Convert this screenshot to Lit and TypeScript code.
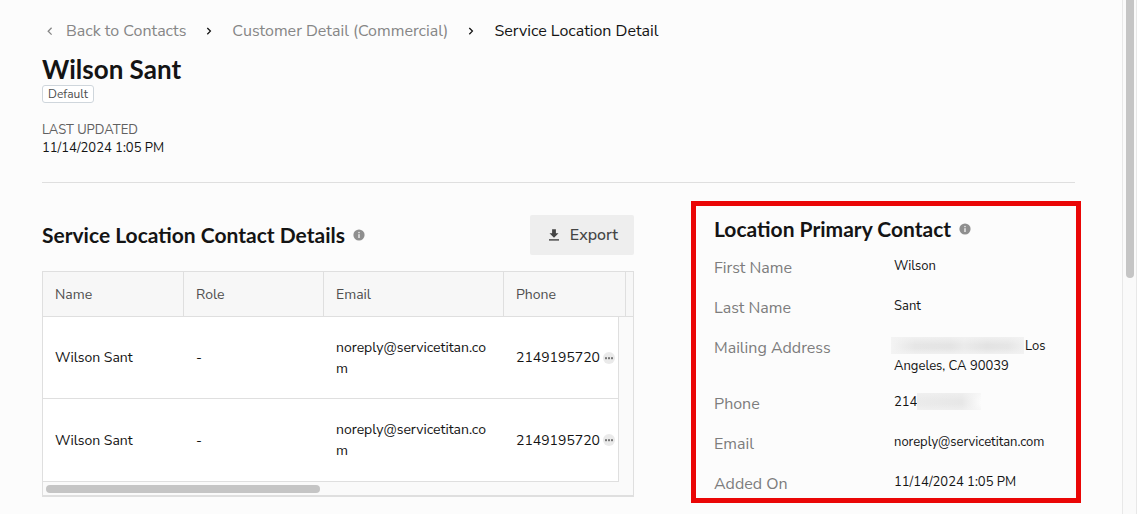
import { LitElement, html, svg, css } from "lit";
import { customElement } from "lit/decorators.js";

interface Contact {
  name: string;
  role: string;
  email: string;
  phone: string;
}

const contacts: Contact[] = [
  { name: "Wilson Sant", role: "-", email: "noreply@servicetitan.com", phone: "2149195720" },
  { name: "Wilson Sant", role: "-", email: "noreply@servicetitan.com", phone: "2149195720" },
];

const chevronRight = html`<svg class="chevron" viewBox="0 0 16 16" aria-hidden="true">
  ${svg`<path d="M6.3 5 L9.4 8.1 L6.3 11.2" />`}
</svg>`;

const infoIcon = html`<svg class="info" viewBox="0 0 12 12" role="img" aria-label="More information">
  ${svg`<circle cx="6" cy="6" r="5.6" fill="#8f8f8f" />
  <rect x="5.4" y="5.2" width="1.2" height="3.8" fill="#fff" />
  <rect x="5.4" y="2.9" width="1.2" height="1.3" fill="#fff" />`}
</svg>`;

@customElement("app-root")
export class AppRoot extends LitElement {
  static styles = css`
    :host {
      display: flex;
      min-height: 100vh;
      background: #fcfcfc;
      color: #141414;
      font-family: "Nunito Sans", Roboto, sans-serif;
      font-size: 14px;
    }
    * {
      box-sizing: border-box;
    }
    .main {
      flex: 1;
      min-width: 0;
      padding: 19px 47px 11px 42px;
    }
    .crumbs {
      display: flex;
      align-items: center;
      gap: 15px;
      font-size: 16px;
      line-height: 24px;
    }
    .crumbs a {
      display: flex;
      align-items: center;
      gap: 8px;
      color: #868686;
      text-decoration: none;
    }
    .chevron {
      width: 16px;
      height: 16px;
      fill: none;
      stroke: currentColor;
      stroke-width: 1.3;
    }
    h1,
    h2 {
      margin: 0;
      font-family: "Sofia Pro", Lato, sans-serif;
      font-weight: 700;
    }
    h1 {
      margin-top: 10px;
      font-size: 26px;
      line-height: 32px;
    }
    h2 {
      display: flex;
      align-items: center;
      gap: 8px;
      font-size: 21px;
      line-height: 24px;
      white-space: nowrap;
    }
    .info {
      width: 12px;
      height: 12px;
    }
    .tag {
      display: block;
      width: fit-content;
      padding: 0 5px;
      border: 1px solid #cfd6dc;
      border-radius: 3px;
      background: #fff;
      color: #4f4f4f;
      font-size: 12px;
      line-height: 16px;
    }
    .updated {
      margin: 18px 0 25px;
      font-size: 13px;
      line-height: 18px;
    }
    .updated dt {
      color: #606060;
    }
    dd {
      margin: 0;
    }
    .rule {
      margin: 0;
      border: 0;
      border-top: 1px solid #dfdfdf;
    }
    .columns {
      display: grid;
      grid-template-columns: minmax(0, 592fr) minmax(0, 390fr);
      align-items: start;
      column-gap: 57px;
      margin-right: -6px;
    }
    .details {
      padding-top: 32px;
    }
    .bar {
      display: flex;
      align-items: center;
      justify-content: space-between;
      margin-bottom: 16px;
    }
    .export {
      display: flex;
      align-items: center;
      gap: 8px;
      height: 40px;
      padding: 0 16px;
      border: 0;
      border-radius: 2px;
      background: #eee;
      color: #444;
      font: 500 16px/24px "Nunito Sans", Roboto, sans-serif;
    }
    .export svg {
      width: 16px;
      height: 16px;
      fill: #444;
    }
    .grid {
      border: 1px solid #dfdfdf;
      border-bottom-width: 2px;
      background: #fafafa;
    }
    table {
      width: 100%;
      table-layout: fixed;
      border-collapse: separate;
      border-spacing: 0;
    }
    .c-name {
      width: 141px;
    }
    .c-role {
      width: 140px;
    }
    .c-phone {
      width: 115px;
    }
    .c-edge {
      width: 7px;
    }
    th {
      height: 45px;
      padding: 0 12px;
      border-right: 1px solid #dfdfdf;
      border-bottom: 1px solid #dfdfdf;
      background: #f7f7f7;
      color: #4f4f4f;
      font-weight: 400;
      text-align: left;
    }
    th.last {
      padding: 0;
      border-right: 0;
    }
    td {
      height: 82px;
      padding: 0 12px;
      border-bottom: 1px solid #dfdfdf;
      background: #fff;
      line-height: 21px;
      overflow-wrap: anywhere;
    }
    tr:last-child td {
      height: 83px;
    }
    td.phone {
      padding-right: 3px;
      border-right: 1px solid #dfdfdf;
    }
    td.track {
      padding: 0;
      border: 0;
      background: #fafafa;
    }
    .call {
      display: flex;
      align-items: center;
      justify-content: space-between;
    }
    .more {
      width: 12px;
      height: 12px;
      padding: 0;
      border: 0;
      border-radius: 50%;
      background: #eaeaea;
      line-height: 0;
    }
    .more svg {
      width: 12px;
      height: 12px;
      fill: #777;
    }
    .hscroll {
      padding: 3px 3px 2px;
    }
    .hthumb {
      width: 47%;
      height: 8px;
      border-radius: 4px;
      background: #c5c5c5;
    }
    .primary {
      margin-top: 18px;
      padding: 11px 18px 2px;
      border: 5px solid #ea0606;
    }
    .facts {
      margin: 15px 0 0;
    }
    .fact {
      display: grid;
      grid-template-columns: 180px 1fr;
      align-items: start;
      padding-bottom: 16px;
    }
    .fact:last-child {
      padding-bottom: 0;
    }
    .fact dt {
      color: #7d7d7d;
      font-size: 16px;
      line-height: 24px;
    }
    .fact dd {
      font-size: 13px;
      line-height: 20px;
    }
    .redacted {
      display: inline-block;
      height: 17px;
      vertical-align: middle;
    }
    .street {
      width: 133px;
      margin: -3px 1px -1px -3px;
      background: linear-gradient(#f3f3f3cc, transparent 45%, transparent 65%, #f3f3f3cc),
        linear-gradient(90deg, #f4f4f4, #e6e6e6 18%, #e4e4e4 45%, #ebebeb 55%, #e3e3e3 72%, #e6e6e6 88%, #f0f0f0);
    }
    .digits {
      width: 64px;
      margin: -3px 0 -1px;
      background: linear-gradient(#f3f3f399, transparent 45%, transparent 65%, #f3f3f399),
        linear-gradient(90deg, #ebebeb, #e7e7e7 70%, #fcfcfc);
    }
    .rail {
      flex: none;
      width: 15px;
      padding: 0 2px 0 3px;
      border: solid #e8e8e8;
      border-width: 0 1px;
      background: #fafafa;
    }
    .thumb {
      width: 8px;
      height: 54vh;
      border-radius: 0 0 4px 4px;
      background: #c5c5c5;
    }
  `;

  private row(contact: Contact, index: number) {
    return html`<tr>
      <td>${contact.name}</td>
      <td>${contact.role}</td>
      <td>${contact.email}</td>
      <td class="phone">
        <div class="call">
          ${contact.phone}
          <button class="more" aria-label="More phone numbers">
            <svg viewBox="0 0 12 12" aria-hidden="true">
              ${svg`<rect x="2" y="5.2" width="2" height="2" /><rect x="5" y="5.2" width="2" height="2" /><rect x="8" y="5.2" width="2" height="2" />`}
            </svg>
          </button>
        </div>
      </td>
      ${index === 0 ? html`<td class="track" colspan="2" rowspan=${contacts.length}></td>` : null}
    </tr>`;
  }

  private fact(label: string, value: unknown) {
    return html`<div class="fact"><dt>${label}</dt><dd>${value}</dd></div>`;
  }

  render() {
    return html`
      <main class="main">
        <nav class="crumbs" aria-label="Breadcrumb">
          <a href="#contacts">
            <svg class="chevron" viewBox="0 0 16 16" aria-hidden="true">
              ${svg`<path d="M9.6 4.8 L6.2 8.2 L9.6 11.6" />`}
            </svg>
            Back to Contacts
          </a>
          ${chevronRight}
          <a href="#customer">Customer Detail (Commercial)</a>
          ${chevronRight}
          <span>Service Location Detail</span>
        </nav>
        <h1>Wilson Sant</h1>
        <span class="tag">Default</span>
        <dl class="updated">
          <dt>LAST UPDATED</dt>
          <dd>11/14/2024 1:05 PM</dd>
        </dl>
        <hr class="rule" />
        <div class="columns">
          <section class="details">
            <div class="bar">
              <h2>Service Location Contact Details ${infoIcon}</h2>
              <button class="export">
                <svg viewBox="0 0 16 16" aria-hidden="true">
                  ${svg`<path d="M6.1 2.2h3.8v4h2.6L8 10.7 3.5 6.2h2.6z" /><rect x="3" y="12.2" width="10" height="1.4" />`}
                </svg>
                Export
              </button>
            </div>
            <div class="grid">
              <table>
                <colgroup>
                  <col class="c-name" />
                  <col class="c-role" />
                  <col />
                  <col class="c-phone" />
                  <col class="c-edge" />
                  <col class="c-edge" />
                </colgroup>
                <thead>
                  <tr>
                    <th>Name</th>
                    <th>Role</th>
                    <th>Email</th>
                    <th colspan="2">Phone</th>
                    <th class="last"></th>
                  </tr>
                </thead>
                <tbody>
                  ${contacts.map((contact, index) => this.row(contact, index))}
                </tbody>
              </table>
              <div class="hscroll"><div class="hthumb"></div></div>
            </div>
          </section>
          <section class="primary">
            <h2>Location Primary Contact ${infoIcon}</h2>
            <dl class="facts">
              ${this.fact("First Name", "Wilson")}
              ${this.fact("Last Name", "Sant")}
              ${this.fact("Mailing Address", html`<span class="redacted street"></span>Los Angeles, CA 90039`)}
              ${this.fact("Phone", html`214<span class="redacted digits"></span>`)}
              ${this.fact("Email", "noreply@servicetitan.com")}
              ${this.fact("Added On", "11/14/2024 1:05 PM")}
            </dl>
          </section>
        </div>
      </main>
      <div class="rail"><div class="thumb"></div></div>
    `;
  }
}
